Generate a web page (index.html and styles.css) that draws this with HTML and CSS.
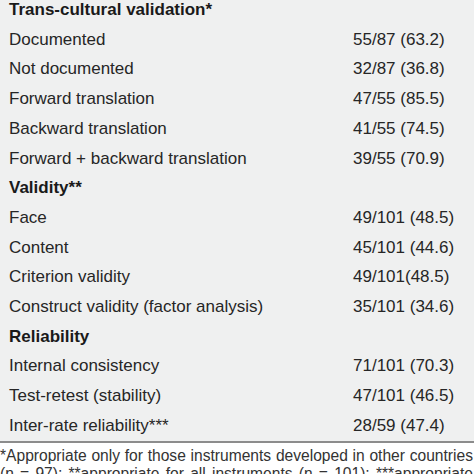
FILE: index.html
```html
<!DOCTYPE html>
<html lang="en">
<head>
    <meta charset="UTF-8">
    <meta name="viewport" content="width=device-width, initial-scale=1.0">
    <title>Validation Table</title>
    <link rel="stylesheet" href="styles.css">
</head>
<body>

<div class="page">
    <table class="results">
        <tr class="group"><td>Trans-cultural validation*</td><td></td></tr>
        <tr><td>Documented</td><td>55/87 (63.2)</td></tr>
        <tr><td>Not documented</td><td>32/87 (36.8)</td></tr>
        <tr><td>Forward translation</td><td>47/55 (85.5)</td></tr>
        <tr><td>Backward translation</td><td>41/55 (74.5)</td></tr>
        <tr><td>Forward + backward translation</td><td>39/55 (70.9)</td></tr>
        <tr class="group"><td>Validity**</td><td></td></tr>
        <tr><td>Face</td><td>49/101 (48.5)</td></tr>
        <tr><td>Content</td><td>45/101 (44.6)</td></tr>
        <tr><td>Criterion validity</td><td>49/101(48.5)</td></tr>
        <tr><td>Construct validity (factor analysis)</td><td>35/101 (34.6)</td></tr>
        <tr class="group"><td>Reliability</td><td></td></tr>
        <tr><td>Internal consistency</td><td>71/101 (70.3)</td></tr>
        <tr><td>Test-retest (stability)</td><td>47/101 (46.5)</td></tr>
        <tr><td>Inter-rate reliability***</td><td>28/59 (47.4)</td></tr>
    </table>
    <p class="footnote">*Appropriate only for those instruments developed in other countries (n = 97); **appropriate for all instruments (n = 101); ***appropriate only for those instruments using raters or observers (n = 59).</p>
</div>

</body>
</html>
```

FILE: styles.css
```css
body {
    margin: 0;
    background: #fff;
    font-family: "Liberation Sans", Arial, sans-serif;
    color: #262626;
}
.page {
    width: 474px;
    height: 474px;
    overflow: hidden;
}
.results {
    width: 474px;
    margin-top: -5px;
    border-collapse: collapse;
    background: #eff0f0;
    border-bottom: 2px solid #8c8c8c;
    font-size: 17px;
}
.results td {
    height: 29.7px;
    padding: 0 0 0 9px;
    line-height: 29.7px;
    white-space: nowrap;
}
.results td:first-child {
    width: 335px;
}
.results .group td {
    font-weight: bold;
    color: #1a1a1a;
}
.footnote {
    width: 473px;
    margin: 4.5px 0 0 0;
    font-size: 15.6px;
    line-height: 18px;
    text-align: justify;
    color: #333;
}
```
